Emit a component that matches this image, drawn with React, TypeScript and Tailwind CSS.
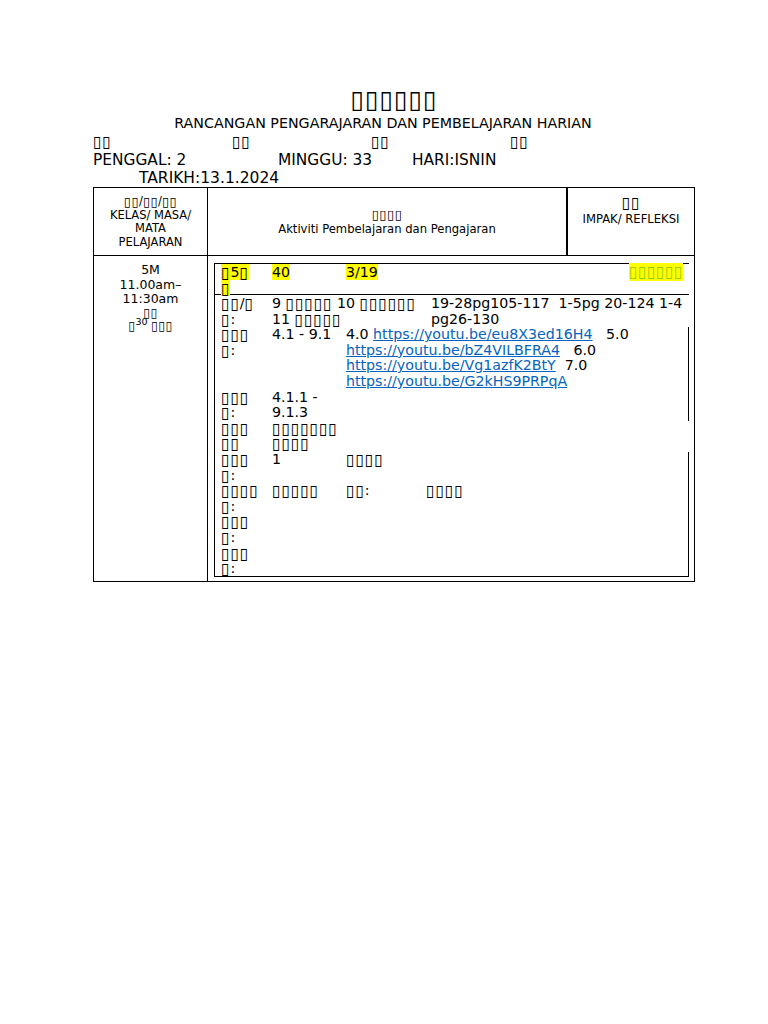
const font = { fontFamily: '"DejaVu Sans", sans-serif' };

// missing-glyph boxes: enlarge them a little so they read like the original tofu
function X({ s }: { s: string }) {
  return (
    <>
      {s.split(/(▯+)/).map((part, i) =>
        part.startsWith("▯") ? (
          <span key={i} className="align-top text-[1.12em] tracking-[0.04em]">
            {part}
          </span>
        ) : (
          <span key={i}>{part}</span>
        )
      )}
    </>
  );
}

function Label({ lines }: { lines: string[] }) {
  return (
    <div className="w-[51px] shrink-0">
      {lines.map((l, i) => (
        <div key={i}>
          <X s={l} />
        </div>
      ))}
    </div>
  );
}

function Link({ href }: { href: string }) {
  return <span className="text-[#0563c1] underline">{href}</span>;
}

export default function App() {
  return (
    <div className="min-h-[1024px] bg-white text-black" style={font}>
      <div className="pl-[93px] pt-[86px]">
        <div className="w-[602px]">
          <div className="text-center text-[22px] leading-[28px]">
            <X s="▯▯▯▯▯▯" />
          </div>
          <div className="pr-[22px] text-center text-[14.25px] leading-[18px]">
            RANCANGAN PENGARAJARAN DAN PEMBELAJARAN HARIAN
          </div>
          <div className="flex text-[14px] leading-[19px]">
            <span className="w-[139px]">
              <X s="▯▯" />
            </span>
            <span className="w-[139px]">
              <X s="▯▯" />
            </span>
            <span className="w-[139px]">
              <X s="▯▯" />
            </span>
            <span>
              <X s="▯▯" />
            </span>
          </div>
          <div className="flex text-[15.4px] leading-[18px]">
            <span className="w-[185px]">PENGGAL: 2</span>
            <span className="w-[134px]">MINGGU: 33</span>
            <span>HARI:ISNIN</span>
          </div>
          <div className="pl-[46px] text-[15.5px] leading-[18px]">TARIKH:13.1.2024</div>

          <div className="border border-black">
            <div className="flex h-[68px] border-b border-black">
              <div className="w-[114px] shrink-0 border-r border-black pt-[7px] text-center text-[11.5px] leading-[13.5px]">
                <div>
                  <X s="▯▯/▯▯/▯▯" />
                </div>
                <div>KELAS/ MASA/</div>
                <div>MATA</div>
                <div>PELAJARAN</div>
              </div>
              <div className="w-[360px] shrink-0 border-r-2 border-black pt-[20px] text-center text-[11.6px] leading-[14px]">
                <div>
                  <X s="▯▯▯▯" />
                </div>
                <div>Aktiviti Pembelajaran dan Pengajaran</div>
              </div>
              <div className="flex-1 pt-[6px] text-center">
                <div className="text-[14px] leading-[18px]">
                  <X s="▯▯" />
                </div>
                <div className="text-[11.6px] leading-[14px]">IMPAK/ REFLEKSI</div>
              </div>
            </div>
            <div className="flex h-[325px]">
              <div className="w-[114px] shrink-0 border-r border-black pt-[7px] text-center text-[12.5px] leading-[14.5px]">
                <div>5M</div>
                <div>11.00am–</div>
                <div>11:30am</div>
                <div className="text-[11px] leading-[13.5px]">
                  <X s="▯▯" />
                </div>
                <div className="text-[11px] leading-[13.5px]">
                  <X s="▯" />
                  <sup className="text-[9.5px]">30</sup> <X s="▯▯▯" />
                </div>
              </div>
              <div className="flex-1 pl-[6px] pt-[7px]">
                <div className="h-[314px] w-[475px] border-b border-l border-t border-black text-[14.2px] leading-[15.6px]">
                  <div className="flex h-[31px] w-[474px] border-b border-black pl-[6px] pt-px">
                    <div className="w-[51px] shrink-0">
                      <div>
                        <span className="bg-[#ffff00]">
                          <X s="▯5▯" />
                        </span>
                      </div>
                      <div>
                        <span className="bg-[#ffff00]">
                          <X s="▯" />
                        </span>
                      </div>
                    </div>
                    <div className="w-[74px] shrink-0">
                      <span className="bg-[#ffff00]">40</span>
                    </div>
                    <div className="flex-1">
                      <span className="bg-[#ffff00]">3/19</span>
                    </div>
                    <div className="pr-[6px]">
                      <span className="bg-[#ffff00] align-top text-[15.5px] tracking-[0.03em] text-[#99cc00]">▯▯▯▯▯▯</span>
                    </div>
                  </div>

                  <div className="pl-[6px] pt-[1px]">
                    <div className="flex">
                      <Label lines={["▯▯/▯", "▯:"]} />
                      <div className="w-[159px] shrink-0">
                        <div>
                          <X s="9 ▯▯▯▯▯ 10 ▯▯▯▯▯▯" />
                        </div>
                        <div>
                          <X s="11 ▯▯▯▯▯" />
                        </div>
                      </div>
                      <div className="flex-1">
                        <div className="whitespace-pre">19-28pg105-117  1-5pg 20-124 1-4</div>
                        <div>pg26-130</div>
                      </div>
                    </div>
                    <div className="flex w-[468px] border-r border-black">
                      <Label lines={["▯▯▯", "▯:"]} />
                      <div className="w-[74px] shrink-0">4.1 - 9.1</div>
                      <div className="flex-1">
                        <div className="whitespace-pre">
                          4.0 <Link href="https://youtu.be/eu8X3ed16H4" />   5.0
                        </div>
                        <div className="whitespace-pre">
                          <Link href="https://youtu.be/bZ4VILBFRA4" />   6.0
                        </div>
                        <div className="whitespace-pre">
                          <Link href="https://youtu.be/Vg1azfK2BtY" />  7.0
                        </div>
                        <div>
                          <Link href="https://youtu.be/G2kHS9PRPqA" />
                        </div>
                      </div>
                    </div>
                    <div className="flex w-[468px] border-r border-black">
                      <Label lines={["▯▯▯", "▯:"]} />
                      <div className="w-[74px] shrink-0">
                        <div>4.1.1 -</div>
                        <div>9.1.3</div>
                      </div>
                    </div>
                    <div className="flex">
                      <Label lines={["▯▯▯", "▯▯"]} />
                      <div>
                        <div>
                          <X s="▯▯▯▯▯▯▯" />
                        </div>
                        <div>
                          <X s="▯▯▯▯" />
                        </div>
                      </div>
                    </div>
                    <div className="w-[468px] border-r border-black">
                      <div className="flex">
                        <Label lines={["▯▯▯", "▯:"]} />
                        <div className="w-[74px] shrink-0">1</div>
                        <div>
                          <X s="▯▯▯▯" />
                        </div>
                      </div>
                      <div className="flex">
                        <Label lines={["▯▯▯▯", "▯:"]} />
                        <div className="w-[74px] shrink-0">
                          <X s="▯▯▯▯▯" />
                        </div>
                        <div className="w-[80px] shrink-0">
                          <X s="▯▯:" />
                        </div>
                        <div>
                          <X s="▯▯▯▯" />
                        </div>
                      </div>
                      <div className="flex">
                        <Label lines={["▯▯▯", "▯:"]} />
                      </div>
                      <div className="flex">
                        <Label lines={["▯▯▯", "▯:"]} />
                      </div>
                    </div>
                  </div>
                </div>
              </div>
            </div>
          </div>
        </div>
      </div>
    </div>
  );
}
